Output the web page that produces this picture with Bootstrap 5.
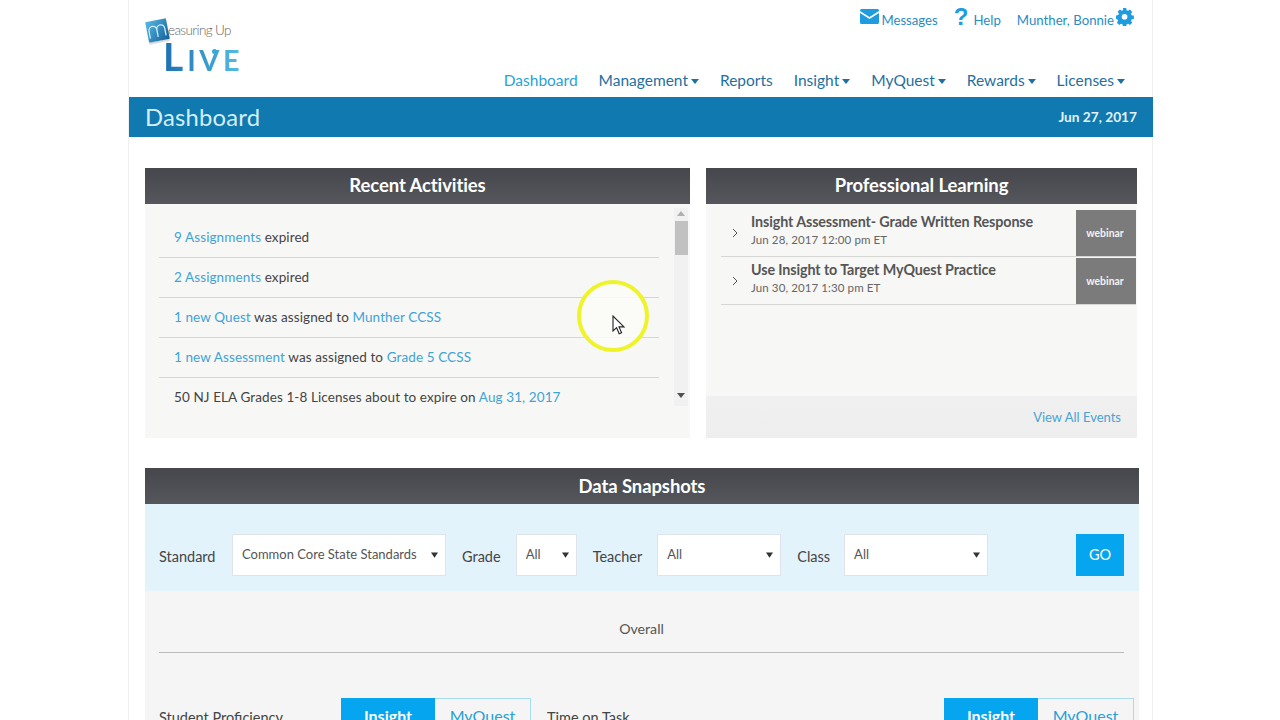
<!DOCTYPE html>
<html lang="en">
<head>
    <meta charset="UTF-8">
    <meta name="viewport" content="width=device-width, initial-scale=1.0">
    <title>Dashboard</title>
    <link href="https://cdn.jsdelivr.net/npm/bootstrap@5.3.2/dist/css/bootstrap.min.css" rel="stylesheet">
    <style>
        html, body { height: 720px; overflow: hidden; }
        body { font-family: Lato, "Liberation Sans", sans-serif; background: #fff; color: #444; font-size: 13px; }
        a { text-decoration: none; color: #2a9fd6; }

        .page-shell { width: 1025px; margin-left: 128px; height: 720px; border-left: 1px solid #f0f0f0; border-right: 1px solid #f0f0f0; position: relative; }

        /* top header */
        .top-head { height: 97px; padding: 0 27px 0 16px; }
        .brand-logo { width: 96px; height: 60px; position: relative; margin-top: 17px; }
        .logo-square { position: absolute; left: 2px; top: 3px; width: 21px; height: 21px; background: linear-gradient(135deg, #5ab9e2, #125f9c); transform: rotate(-11deg); box-shadow: 0 2px 1px rgba(0,0,0,.15); }
        .logo-square svg { position: absolute; left: 1px; top: 4px; }
        .logo-top { position: absolute; left: 23px; top: 4px; font-size: 13.500px; letter-spacing: -.6px; color: #666; font-weight: 300; white-space: nowrap; line-height: 18px; }
        .logo-live { position: absolute; left: 18px; top: 23px; height: 32px; line-height: 32px; font-weight: 700; white-space: nowrap; background: linear-gradient(90deg, #1c6fb0, #56c0e4); -webkit-background-clip: text; background-clip: text; color: transparent; }
        .logo-big { font-size: 39px; margin-right: 4px; }
        .logo-small { font-size: 29px; letter-spacing: 3.500px; }
        .logo-dot { position: absolute; left: 67px; top: 32px; width: 5px; height: 5px; border-radius: 50%; background: #3aa7d9; }
        .util-links { height: 36px; padding-top: 11px; font-size: 13.200px; gap: 16px; margin-right: -9px; }
        .util-links a { color: #2a8cc4; display: flex; align-items: center; gap: 2px; }
        .util-icon { margin-top: -8px; color: #1f9ce0; }
        .help-mark { font-family: "Liberation Sans", sans-serif; font-size: 24px; line-height: 18px; font-weight: 700; margin-right: 3px; }
        .main-links { font-size: 15.500px; gap: 21px; height: 30px; margin-top: 30px; }
        .main-links a { color: #1f6f9f; white-space: nowrap; }
        .main-links a.current { color: #2a9fd6; }
        .caret-down { display: inline-block; width: 0; height: 0; margin-left: 3px; vertical-align: 2px; border-left: 4.500px solid transparent; border-right: 4.500px solid transparent; border-top: 5px solid currentColor; }

        .title-bar { height: 40px; background: #0f79b0; color: #d4eefa; padding: 0 16px; margin-right: -1px; }
        .title-bar h1 { font-size: 23.800px; font-weight: 400; margin: 0; letter-spacing: .2px; }
        .title-date { font-size: 13.700px; font-weight: 700; color: #e4f2f9; }

        /* panels */
        .panel-row { padding: 31px 16px 0; gap: 16px; }
        .panel-box { height: 270px; background: #f7f7f5; position: relative; flex-shrink: 0; }
        .panel-left { width: 545px; }
        .panel-right { width: 431px; }
        .panel-head { height: 36px; line-height: 34px; text-align: center; color: #fff; font-size: 18.500px; font-weight: 700; background: linear-gradient(#45474c, #55575c); letter-spacing: -.1px; }

        .activity-list { padding: 14px 31px 0 14px; }
        .activity-item { height: 40px; line-height: 38px; padding-left: 15px; border-bottom: 1px solid #d6d6d4; white-space: nowrap; font-size: 13.500px; letter-spacing: .1px; }
        .activity-item:last-child { border-bottom: 0; }
        .activity-item a { color: #3fa3d6; }
        .fake-scroll { position: absolute; left: 529px; top: 40px; width: 14px; height: 198px; background: #f1f1f1; }
        .fake-thumb { position: absolute; left: 1px; top: 13px; width: 13px; height: 34px; background: #c1c1c1; }
        .arrow-up, .arrow-down { position: absolute; left: 3px; width: 0; height: 0; border-left: 4px solid transparent; border-right: 4px solid transparent; }
        .arrow-up { top: 3px; border-bottom: 5px solid #b0b0b0; }
        .arrow-down { bottom: 8px; border-top: 5px solid #505050; }

        .event-list { padding: 6px 1px 0 15px; }
        .event-item { height: 47px; border-bottom: 1px solid #d6d6d4; margin-bottom: 1px; }
        .event-chevron { width: 30px; text-align: center; padding-right: 3px; }
        .event-title { font-size: 14.300px; color: #555; line-height: 18px; margin-top: 3px; font-weight: 700; letter-spacing: -.1px; }
        .event-date { font-size: 11.500px; color: #666; line-height: 17px; letter-spacing: .1px; }
        .webinar-tag { width: 60px; height: 46px; background: #7b7b7b; color: #f4f4f4; font-size: 10.400px; font-weight: 700; padding: 2px 2px 0 0; }
        .event-foot { position: absolute; left: 0; right: 0; bottom: 0; height: 42px; background: linear-gradient(#f0f0f0, #eeeeef); text-align: right; padding: 12px 16px 0 0; }
        .event-foot a { color: #4aa3d3; }

        /* snapshots */
        .snap-box { margin: 30px 0 0 16px; width: 994px; background: #f5f5f5; height: 260px; }
        .snap-box .panel-head { line-height: 36px; }
        .filter-band { height: 87px; background: #e2f3fc; padding: 15px 15px 0 14px; }
        .filter-band label { font-size: 14.500px; color: #444; margin: 4px 15px 0 0; }
        .filter-band label.label-standard { min-width: 58px; }
        .filter-band label.label-class { margin-right: 14px; }
        .filter-band .form-select { height: 42px; border-radius: 0; border: 1px solid #dfe3ea; font-size: 13px; color: #555; padding: 1px 9px 0; margin-top: -1px; background-position: right 7px center; background-size: 7px 6px; background-image: url("data:image/svg+xml,%3Csvg xmlns='http://www.w3.org/2000/svg' viewBox='0 0 8 6'%3E%3Cpath d='M0 0h8L4 6z' fill='%23333'/%3E%3C/svg%3E"); box-shadow: none; }
        .go-btn { width: 48px; height: 42px; margin-top: -1px; background: #05a5ef; color: #fff; border: 0; border-radius: 0; font-size: 14.500px; padding: 1px 0 0; }
        .overall-line { margin: 0 15px 0 14px; height: 62px; padding-top: 29px; border-bottom: 1px solid #bbb; text-align: center; font-size: 14.200px; color: #555; line-height: 18px; }
        .metric-row { padding: 45px 5px 0 14px; height: 90px; }
        .metric-label { font-size: 14.500px; color: #444; margin-top: 13px; line-height: 1; }
        .toggle-pair .btn { border-radius: 0; height: 40px; font-size: 16px; width: 94px; padding: 0 0 4px; line-height: 18px; }
        .toggle-on, .toggle-on:hover { background: #05a5ef; border: 1px solid #05a5ef; color: #fff; font-weight: 700; }
        .toggle-off, .toggle-off:hover { background: #f5f5f5; border: 1px solid #a7dcef; border-left: 0; color: #2a9fd6; }

        /* recorder's cursor highlight */
        .cursor-ring { position: absolute; left: 448px; top: 280px; width: 72px; height: 72px; border-radius: 50%; border: 4px solid #eef32a; background: rgba(252,252,248,.85); filter: blur(.7px); }
        .cursor-arrow { position: absolute; left: 483px; top: 315px; }
    </style>
</head>
<body>
    <div class="page-shell">
        <!-- Header -->
        <div class="top-head d-flex justify-content-between">
            <div class="brand-logo">
                <div class="logo-square">
                    <svg width="24" height="14" viewBox="0 0 24 14"><path d="M1 13V6c0-6 8-6 8 0v7M9 6c0-6 8-6 8 0v7" fill="none" stroke="#cdeefb" stroke-width="1.300"/></svg>
                </div>
                <div class="logo-top">easuring Up</div>
                <div class="logo-live"><span class="logo-big">L</span><span class="logo-small">IVE</span></div>
                <span class="logo-dot"></span>
            </div>
            <div class="d-flex flex-column align-items-end">
                <div class="util-links d-flex align-items-start">
                    <a href="#">
                        <svg class="util-icon" width="19" height="15" viewBox="0 0 19 15"><path fill="#1f9ce0" d="M1.500 0h16A1.500 1.500 0 0 1 19 1.500v.6L9.500 8 0 2.100v-.6A1.500 1.500 0 0 1 1.500 0zM0 4l9.500 5.900L19 4v9.500a1.500 1.500 0 0 1-1.500 1.500h-16A1.500 1.500 0 0 1 0 13.500z"/></svg>
                        <span>Messages</span>
                    </a>
                    <a href="#">
                        <span class="util-icon help-mark">?</span>
                        <span>Help</span>
                    </a>
                    <a href="#">
                        <span>Munther, Bonnie</span>
                        <svg class="util-icon" width="18" height="18" viewBox="0 0 18 18"><path fill="#1f9ce0" fill-rule="evenodd" d="M7.300 0h3.400l.5 2.400 1.500.6 2-1.300 2.400 2.400-1.300 2 .6 1.500 2.400.5v3.400l-2.400.5-.6 1.500 1.300 2-2.400 2.400-2-1.300-1.500.6-.5 2.400H7.300l-.5-2.400-1.500-.6-2 1.300L.9 15.500l1.300-2-.6-1.500L0 11.300V7.900l2.400-.5.6-1.500-1.300-2 2.400-2.400 2 1.300 1.500-.6zM9 6.200a3 3 0 1 0 0 6 3 3 0 0 0 0-6z" transform="scale(.95)"/></svg>
                    </a>
                </div>
                <div class="main-links d-flex align-items-center">
                    <a class="current" href="#">Dashboard</a>
                    <a href="#">Management<span class="caret-down"></span></a>
                    <a href="#">Reports</a>
                    <a href="#">Insight<span class="caret-down"></span></a>
                    <a href="#">MyQuest<span class="caret-down"></span></a>
                    <a href="#">Rewards<span class="caret-down"></span></a>
                    <a href="#">Licenses<span class="caret-down"></span></a>
                </div>
            </div>
        </div>

        <div class="title-bar d-flex justify-content-between align-items-center">
            <h1>Dashboard</h1>
            <span class="title-date">Jun 27, 2017</span>
        </div>

        <!-- Recent Activities and Professional Learning -->
        <div class="panel-row d-flex">
            <div class="panel-box panel-left">
                <div class="panel-head">Recent Activities</div>
                <div class="activity-list">
                    <div class="activity-item"><a href="#">9 Assignments</a> expired</div>
                    <div class="activity-item"><a href="#">2 Assignments</a> expired</div>
                    <div class="activity-item"><a href="#">1 new Quest</a> was assigned to <a href="#">Munther CCSS</a></div>
                    <div class="activity-item"><a href="#">1 new Assessment</a> was assigned to <a href="#">Grade 5 CCSS</a></div>
                    <div class="activity-item">50 NJ ELA Grades 1-8 Licenses about to expire on <a href="#">Aug 31, 2017</a></div>
                </div>
                <div class="fake-scroll">
                    <span class="arrow-up"></span>
                    <div class="fake-thumb"></div>
                    <span class="arrow-down"></span>
                </div>
            </div>
            <div class="panel-box panel-right">
                <div class="panel-head">Professional Learning</div>
                <div class="event-list">
                    <div class="event-item d-flex">
                        <div class="event-chevron d-flex align-items-center justify-content-center">
                            <svg width="6" height="10" viewBox="0 0 6 10"><path d="M1 1l4 4-4 4" fill="none" stroke="#555" stroke-width="1"/></svg>
                        </div>
                        <div class="flex-grow-1">
                            <div class="event-title">Insight Assessment- Grade Written Response</div>
                            <div class="event-date">Jun 28, 2017 12:00 pm ET</div>
                        </div>
                        <div class="webinar-tag d-flex align-items-center justify-content-center">webinar</div>
                    </div>
                    <div class="event-item d-flex">
                        <div class="event-chevron d-flex align-items-center justify-content-center">
                            <svg width="6" height="10" viewBox="0 0 6 10"><path d="M1 1l4 4-4 4" fill="none" stroke="#555" stroke-width="1"/></svg>
                        </div>
                        <div class="flex-grow-1">
                            <div class="event-title">Use Insight to Target MyQuest Practice</div>
                            <div class="event-date">Jun 30, 2017 1:30 pm ET</div>
                        </div>
                        <div class="webinar-tag d-flex align-items-center justify-content-center">webinar</div>
                    </div>
                </div>
                <div class="event-foot"><a href="#">View All Events</a></div>
            </div>
        </div>

        <!-- Data Snapshots -->
        <div class="snap-box">
            <div class="panel-head">Data Snapshots</div>
            <div class="filter-band d-flex align-items-center">
                <label class="label-standard">Standard</label>
                <select class="form-select me-3" style="width:214px"><option>Common Core State Standards</option></select>
                <label>Grade</label>
                <select class="form-select me-3" style="width:61px"><option>All</option></select>
                <label>Teacher</label>
                <select class="form-select me-3" style="width:124px"><option>All</option></select>
                <label class="label-class">Class</label>
                <select class="form-select" style="width:144px"><option>All</option></select>
                <button class="btn go-btn ms-auto">GO</button>
            </div>
            <div class="overall-line">Overall</div>
            <div class="metric-row d-flex">
                <div class="metric-label" style="width:182px">Student Proficiency</div>
                <div class="toggle-pair d-flex">
                    <button class="btn toggle-on">Insight</button>
                    <button class="btn toggle-off" style="width:96px">MyQuest</button>
                </div>
                <div class="metric-label ms-3">Time on Task</div>
                <div class="toggle-pair d-flex ms-auto">
                    <button class="btn toggle-on">Insight</button>
                    <button class="btn toggle-off" style="width:96px">MyQuest</button>
                </div>
            </div>
        </div>

        <div class="cursor-ring"></div>
        <svg class="cursor-arrow" width="14" height="20" viewBox="0 0 14 20"><path d="M1 1v15l3.600-3.300 2.600 6 2.400-1-2.600-5.800h5z" fill="#fff" stroke="#222" stroke-width="1.100"/></svg>
    </div>

    <script src="https://cdn.jsdelivr.net/npm/bootstrap@5.3.2/dist/js/bootstrap.bundle.min.js"></script>
</body>
</html>
